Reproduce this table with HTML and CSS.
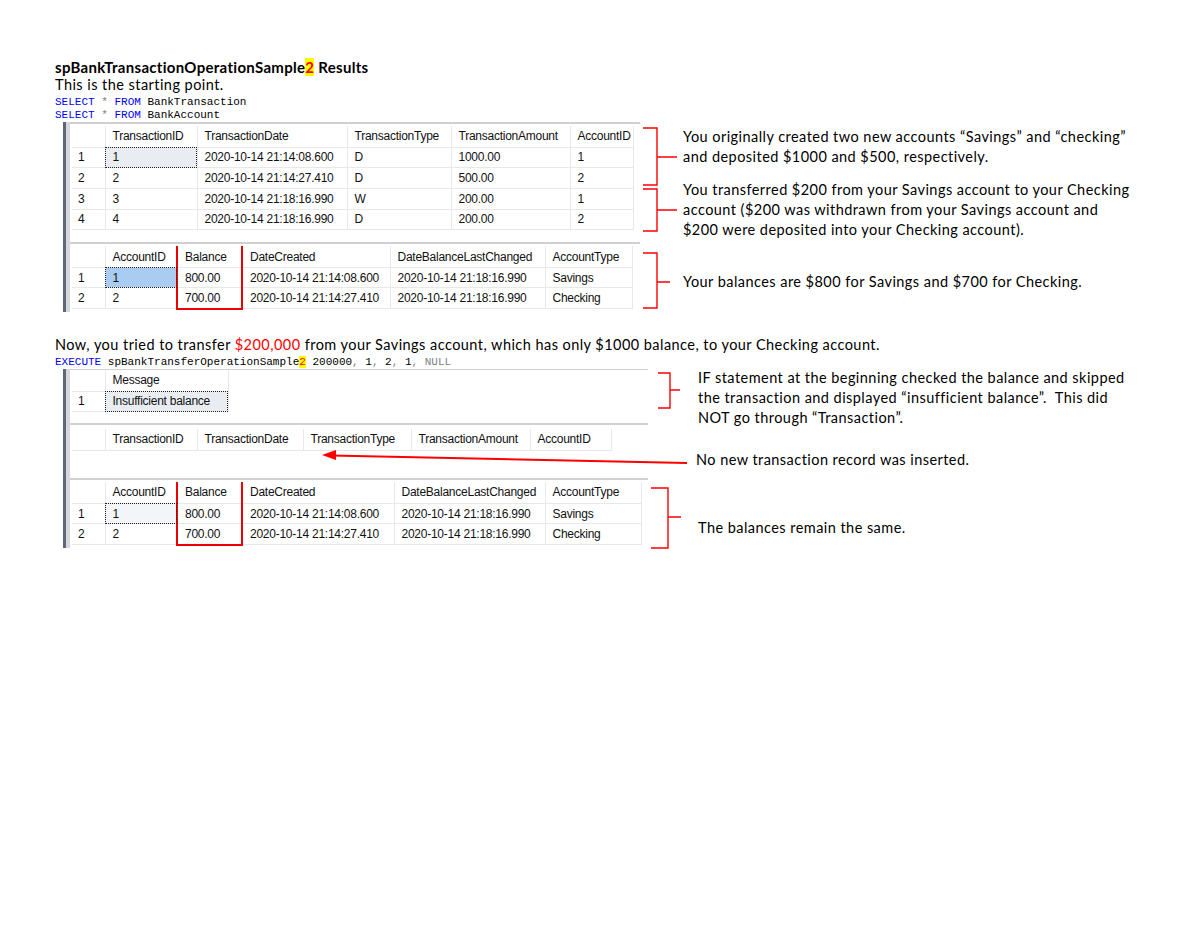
FILE: index.html
```html
<!DOCTYPE html>
<html>
<head>
<meta charset="utf-8">
<link rel="stylesheet" href="styles.css">
</head>
<body>
<div class="doc">
  <h1 class="title">spBankTransactionOperationSample<span class="hl">2</span> Results</h1>
  <p class="lead">This is the starting point.</p>
  <pre class="sql"><span class="kw">SELECT</span> <span class="op">*</span> <span class="kw">FROM</span> BankTransaction
<span class="kw">SELECT</span> <span class="op">*</span> <span class="kw">FROM</span> BankAccount</pre>

  <div class="section s1">
    <div class="results">
      <div class="panel p1a">
        <table class="grid g-t1">
          <colgroup><col class="c-rn"><col class="t1-1"><col class="t1-2"><col class="t1-3"><col class="t1-4"><col class="t1-5"></colgroup>
          <tr><th></th><th>TransactionID</th><th>TransactionDate</th><th>TransactionType</th><th>TransactionAmount</th><th>AccountID</th></tr>
          <tr><td>1</td><td class="focus">1</td><td>2020-10-14 21:14:08.600</td><td>D</td><td>1000.00</td><td>1</td></tr>
          <tr><td>2</td><td>2</td><td>2020-10-14 21:14:27.410</td><td>D</td><td>500.00</td><td>2</td></tr>
          <tr><td>3</td><td>3</td><td>2020-10-14 21:18:16.990</td><td>W</td><td>200.00</td><td>1</td></tr>
          <tr><td>4</td><td>4</td><td>2020-10-14 21:18:16.990</td><td>D</td><td>200.00</td><td>2</td></tr>
        </table>
      </div>
      <div class="panel p1b">
        <table class="grid g-a1">
          <colgroup><col class="c-rn"><col class="a-1"><col class="a-2"><col class="a1-3"><col class="a1-4"><col class="a1-5"></colgroup>
          <tr><th></th><th>AccountID</th><th class="box box-top">Balance</th><th>DateCreated</th><th>DateBalanceLastChanged</th><th>AccountType</th></tr>
          <tr><td>1</td><td class="focus sel">1</td><td class="box">800.00</td><td>2020-10-14 21:14:08.600</td><td>2020-10-14 21:18:16.990</td><td>Savings</td></tr>
          <tr><td>2</td><td>2</td><td class="box box-bot">700.00</td><td>2020-10-14 21:14:27.410</td><td>2020-10-14 21:18:16.990</td><td>Checking</td></tr>
        </table>
      </div>
    </div>
    <svg class="braces b1" width="43" height="190" viewBox="0 0 43 190">
      <path d="M3 6 H17 V63 H3 M17 35 H37 M3 67 H17 V109 H3 M17 88 H37 M3 131 H17 V186 H3 M17 160 H30" fill="none" stroke="#ff0000" stroke-width="1.4"/>
    </svg>
    <div class="notes n1">
      <p class="note1">You originally created two new accounts “Savings” and “checking”<br>and deposited $1000 and $500, respectively.</p>
      <p class="note2">You transferred $200 from your Savings account to your Checking<br>account ($200 was withdrawn from your Savings account and<br>$200 were deposited into your Checking account).</p>
      <p class="note3">Your balances are $800 for Savings and $700 for Checking.</p>
    </div>
  </div>

  <p class="lead now">Now, you tried to transfer <span class="red">$200,000</span> from your Savings account, which has only $1000 balance, to your Checking account.</p>
  <pre class="sql"><span class="kw">EXECUTE</span> spBankTransferOperationSample<span class="hl">2</span> 200000<span class="op">,</span> 1<span class="op">,</span> 2<span class="op">,</span> 1<span class="op">,</span> <span class="op">NULL</span></pre>

  <div class="section s2">
    <div class="results">
      <div class="panel p2a">
        <table class="grid g-m">
          <colgroup><col class="c-rn"><col class="m-1"></colgroup>
          <tr><th></th><th>Message</th></tr>
          <tr><td>1</td><td class="focus">Insufficient balance</td></tr>
        </table>
      </div>
      <div class="panel p2b">
        <table class="grid g-t2">
          <colgroup><col class="c-rn"><col class="t1-1"><col class="t2-2"><col class="t2-3"><col class="t1-4"><col class="t2-5"></colgroup>
          <tr><th></th><th>TransactionID</th><th>TransactionDate</th><th>TransactionType</th><th>TransactionAmount</th><th>AccountID</th></tr>
        </table>
      </div>
      <div class="panel p2c">
        <table class="grid g-a2">
          <colgroup><col class="c-rn"><col class="a-1"><col class="a-2"><col class="a2-3"><col class="a2-4"><col class="a2-5"></colgroup>
          <tr><th></th><th>AccountID</th><th class="box box-top">Balance</th><th>DateCreated</th><th>DateBalanceLastChanged</th><th>AccountType</th></tr>
          <tr><td>1</td><td class="focus">1</td><td class="box">800.00</td><td>2020-10-14 21:14:08.600</td><td>2020-10-14 21:18:16.990</td><td>Savings</td></tr>
          <tr><td>2</td><td>2</td><td class="box box-bot">700.00</td><td>2020-10-14 21:14:27.410</td><td>2020-10-14 21:18:16.990</td><td>Checking</td></tr>
        </table>
      </div>
    </div>
    <svg class="braces b2" width="50" height="185" viewBox="0 0 50 185">
      <path d="M10 4 H22 V39 H10 M22 21 H32 M3 119 H20 V179 H3 M20 148 H33" fill="none" stroke="#ff0000" stroke-width="1.4"/>
    </svg>
    <div class="notes n2">
      <p class="note4">IF statement at the beginning checked the balance and skipped<br>the transaction and displayed “insufficient balance”.&nbsp; This did<br>NOT go through “Transaction”.</p>
      <p class="note5">No new transaction record was inserted.</p>
      <p class="note6">The balances remain the same.</p>
    </div>
    <svg class="arrow" width="380" height="22" viewBox="0 0 380 22">
      <path d="M16 8.5 L372 16" fill="none" stroke="#ff0000" stroke-width="2"/>
      <path d="M7 8 L21 3 L21 13 Z" fill="#ff0000"/>
    </svg>
  </div>
</div>
</body>
</html>
```

FILE: styles.css
```css
html, body {
  margin: 0;
  padding: 0;
  background: #ffffff;
}
body {
  font-family: Lato, "Liberation Sans", sans-serif;
  color: #000000;
}
.doc {
  padding: 58px 0 0 55px;
  position: relative;
}
.title {
  margin: 0;
  font-size: 15px;
  font-weight: 700;
  line-height: 18px;
  letter-spacing: 0.3px;
}
.hl {
  background: #ffff00;
  color: #ff0000;
}
.red {
  color: #ff0000;
}
.lead {
  margin: 0;
  font-size: 14.5px;
  line-height: 18px;
  letter-spacing: 0.45px;
}
.lead.now {
  margin-top: 24px;
}
.sql {
  margin: 2px 0 0;
  font-family: "Liberation Mono", "DejaVu Sans Mono", monospace;
  font-size: 11px;
  line-height: 13px;
  color: #000000;
}
.kw { color: #0000ff; }
.op { color: #808080; }

.section {
  display: flex;
  align-items: flex-start;
  position: relative;
}
.results {
  margin-left: 8px;
  border-left: 3px solid #5f6675;
  padding-left: 4px;
  background: linear-gradient(to right, #d4d7dc 4px, transparent 4px);
  width: 570px;
}
.s2 .results {
  width: 578px;
}
.panel {
  border-top: 2px solid #d0d0d0;
  padding: 2px 0 0 2px;
  background: #ffffff;
}
.p1a { padding-bottom: 12px; }
.p1b { padding-bottom: 2px; }
.p2a { border-top-width: 1px; padding-top: 0; padding-bottom: 11px; }
.p2b { padding-top: 4px; height: 49px; }
.p2c { padding-top: 2px; padding-bottom: 2px; }

.grid {
  border-collapse: collapse;
  table-layout: fixed;
  font-family: "Liberation Sans", Arial, sans-serif;
  font-size: 12px;
  letter-spacing: -0.25px;
  color: #111111;
}
.grid th, .grid td {
  height: 20.7px;
  padding: 0 0 0 7px;
  box-sizing: border-box;
  text-align: left;
  font-weight: 400;
  white-space: nowrap;
  overflow: hidden;
  border: 1px solid #e8e8e8;
}
.grid tr > :first-child {
  border-left: none;
  padding-left: 6px;
}
.grid tr:first-child > * {
  border-top: none;
}
.grid th {
  height: 21px;
}
.focus {
  outline: 1px dotted #222222;
  outline-offset: -1px;
  background: #e9edf2;
}
.focus.sel {
  background: #a9cdf0;
}
.g-a2 .focus {
  background: #f3f5f8;
}
.grid .box {
  border-left: 2px solid #ee0000;
  border-right: 2px solid #ee0000;
}
.grid .box-top {
  border-top: 2px solid #ee0000;
}
.grid .box-bot {
  border-bottom: 2px solid #ee0000;
}

.c-rn { width: 33px; }
.t1-1 { width: 92px; }
.t1-2 { width: 150px; }
.t1-3 { width: 104px; }
.t1-4 { width: 119px; }
.t1-5 { width: 63px; }
.a-1 { width: 72px; }
.a-2 { width: 65px; }
.a1-3 { width: 148px; }
.a1-4 { width: 155px; }
.a1-5 { width: 87px; }
.m-1 { width: 123px; }
.t2-2 { width: 106px; }
.t2-3 { width: 108px; }
.t2-5 { width: 81px; }
.a2-3 { width: 152px; }
.a2-4 { width: 151px; }
.a2-5 { width: 96px; }

.braces {
  display: block;
  flex: none;
}
.notes {
  font-size: 14.5px;
  line-height: 20px;
  letter-spacing: 0.45px;
  white-space: nowrap;
}
.notes p {
  margin: 0;
}
.n1 { width: 470px; }
.note1 { margin-top: 5px !important; }
.note2 { margin-top: 13px !important; }
.note3 { margin-top: 32px !important; }
.n2 { width: 445px; }
.note4 { margin-top: -1px !important; }
.note5 { margin-top: 22px !important; margin-left: -2px !important; }
.note6 { margin-top: 48px !important; }

.arrow {
  position: absolute;
  left: 260px;
  top: 78px;
}
```
